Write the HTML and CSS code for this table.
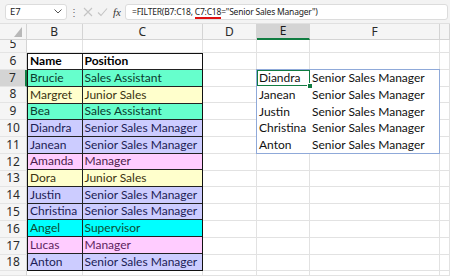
FILE: index.html
```html
<!DOCTYPE html>
<html>
<head>
<meta charset="utf-8">
<link rel="stylesheet" href="styles.css">
</head>
<body>
<div class="app">
  <div class="toolbar">
    <div class="namebox"><span class="nb-text">E7</span>
      <svg class="caret" width="8" height="5" viewBox="0 0 8 5"><path d="M0.5 0.5 L4 4 L7.5 0.5" fill="none" stroke="#555" stroke-width="1"/></svg>
    </div>
    <div class="dots">⋮</div>
    <svg class="ico" width="10" height="10" viewBox="0 0 10 10"><path d="M1 1 L9 9 M9 1 L1 9" stroke="#c4c4c4" stroke-width="1.1" fill="none"/></svg>
    <svg class="ico" width="11" height="10" viewBox="0 0 11 10"><path d="M1 5.5 L4 8.5 L10 1.5" stroke="#c4c4c4" stroke-width="1.1" fill="none"/></svg>
    <div class="fx">fx</div>
    <div class="formula">=FILTER(B7:C18, <span class="err">C7:C18</span>="Senior Sales Manager")</div>
  </div>
  <div class="sheet">
    <div class="layer grid">
      <div class="corner"><svg width="27" height="16" viewBox="0 0 27 16"><path d="M22 3 L22 13 L14 13 Z" fill="#b8b8b8"/></svg></div>
      <div class="ch">B</div><div class="ch">C</div><div class="ch">D</div><div class="ch sel">E</div><div class="ch">F</div><div class="ch last"></div>

      <div class="rh part"><span class="rn">5</span></div><div class="c"></div><div class="c"></div><div class="c"></div><div class="c"></div><div class="c"></div><div class="c"></div>
      <div class="rh">6</div><div class="c"></div><div class="c"></div><div class="c"></div><div class="c"></div><div class="c"></div><div class="c"></div>
      <div class="rh sel">7</div><div class="c"></div><div class="c"></div><div class="c"></div><div class="c"></div><div class="c"></div><div class="c"></div>
      <div class="rh">8</div><div class="c"></div><div class="c"></div><div class="c"></div><div class="c"></div><div class="c"></div><div class="c"></div>
      <div class="rh">9</div><div class="c"></div><div class="c"></div><div class="c"></div><div class="c"></div><div class="c"></div><div class="c"></div>
      <div class="rh">10</div><div class="c"></div><div class="c"></div><div class="c"></div><div class="c"></div><div class="c"></div><div class="c"></div>
      <div class="rh">11</div><div class="c"></div><div class="c"></div><div class="c"></div><div class="c"></div><div class="c"></div><div class="c"></div>
      <div class="rh">12</div><div class="c"></div><div class="c"></div><div class="c"></div><div class="c"></div><div class="c"></div><div class="c"></div>
      <div class="rh">13</div><div class="c"></div><div class="c"></div><div class="c"></div><div class="c"></div><div class="c"></div><div class="c"></div>
      <div class="rh">14</div><div class="c"></div><div class="c"></div><div class="c"></div><div class="c"></div><div class="c"></div><div class="c"></div>
      <div class="rh">15</div><div class="c"></div><div class="c"></div><div class="c"></div><div class="c"></div><div class="c"></div><div class="c"></div>
      <div class="rh">16</div><div class="c"></div><div class="c"></div><div class="c"></div><div class="c"></div><div class="c"></div><div class="c"></div>
      <div class="rh">17</div><div class="c"></div><div class="c"></div><div class="c"></div><div class="c"></div><div class="c"></div><div class="c"></div>
      <div class="rh">18</div><div class="c"></div><div class="c"></div><div class="c"></div><div class="c"></div><div class="c"></div><div class="c"></div>
      <div class="rh"></div><div class="c"></div><div class="c"></div><div class="c"></div><div class="c"></div><div class="c"></div><div class="c"></div>
    </div>
    <div class="layer content">
      <div class="table">
        <div class="t hd">Name</div><div class="t hd">Position</div>
        <div class="t aq">Brucie</div><div class="t aq">Sales Assistant</div>
        <div class="t ye">Margret</div><div class="t ye">Junior Sales</div>
        <div class="t aq">Bea</div><div class="t aq">Sales Assistant</div>
        <div class="t lv">Diandra</div><div class="t lv">Senior Sales Manager</div>
        <div class="t lv">Janean</div><div class="t lv">Senior Sales Manager</div>
        <div class="t pk">Amanda</div><div class="t pk">Manager</div>
        <div class="t ye">Dora</div><div class="t ye">Junior Sales</div>
        <div class="t lv">Justin</div><div class="t lv">Senior Sales Manager</div>
        <div class="t lv">Christina</div><div class="t lv">Senior Sales Manager</div>
        <div class="t cy">Angel</div><div class="t cy">Supervisor</div>
        <div class="t pk2">Lucas</div><div class="t pk2">Manager</div>
        <div class="t lv">Anton</div><div class="t lv">Senior Sales Manager</div>
      </div>
      <div class="spill">
        <div class="s active">Diandra<span class="handle"></span></div><div class="s">Senior Sales Manager</div>
        <div class="s">Janean</div><div class="s">Senior Sales Manager</div>
        <div class="s">Justin</div><div class="s">Senior Sales Manager</div>
        <div class="s">Christina</div><div class="s">Senior Sales Manager</div>
        <div class="s">Anton</div><div class="s">Senior Sales Manager</div>
      </div>
    </div>
  </div>
</div>
</body>
</html>
```

FILE: styles.css
```css
html, body {
  margin: 0;
  padding: 0;
  background: #ffffff;
}
.app {
  width: 450px;
  height: 276px;
  overflow: hidden;
  display: flex;
  flex-direction: column;
  font-family: "Noto Sans", sans-serif;
}
.toolbar {
  height: 24px;
  flex: none;
  background: #f3f3f3;
  display: flex;
  align-items: center;
  box-sizing: border-box;
  padding: 0 2px 0 5px;
  border-bottom: 1px solid #e0e0e0;
}
.namebox {
  width: 62px;
  height: 16px;
  box-sizing: border-box;
  background: #fff;
  border: 1px solid #dcdcdc;
  border-radius: 3px;
  display: flex;
  align-items: center;
  justify-content: space-between;
  padding: 0 4px 0 4px;
}
.nb-text {
  font-size: 9.5px;
  color: #222;
}
.caret { display: block; }
.dots {
  width: 12px;
  margin-left: 1px;
  text-align: center;
  font-size: 10px;
  color: #666;
}
.ico {
  display: block;
  margin-left: 3px;
}
.toolbar .ico + .ico { margin-left: 4px; }
.fx {
  font-family: "Liberation Serif", serif;
  font-style: italic;
  font-size: 11px;
  color: #333;
  margin-left: 5px;
  width: 12px;
}
.formula {
  flex: 1;
  height: 16px;
  box-sizing: border-box;
  margin-left: 0;
  background: #fff;
  border: 1px solid #dcdcdc;
  border-radius: 3px;
  font-size: 8.5px;
  letter-spacing: -0.2px;
  line-height: 14px;
  padding-left: 6px;
  color: #222;
  white-space: nowrap;
  overflow: hidden;
}
.err {
  border-bottom: 2px solid #e01010;
}
.sheet {
  flex: 1;
  display: grid;
}
.layer {
  grid-area: 1 / 1;
  display: grid;
  grid-template-columns: 27px 55.5px 120.5px 54px 53px 130px 1fr;
  grid-template-rows: 16px 13px repeat(13, 16.8px) 1fr;
}
.corner {
  background: #f5f5f5;
  border-right: 1px solid #d4d4d4;
  border-bottom: 1px solid #d4d4d4;
  box-sizing: border-box;
}
.corner svg { display: block; }
.ch {
  background: #f5f5f5;
  border-right: 1px solid #d4d4d4;
  border-bottom: 1px solid #d4d4d4;
  box-sizing: border-box;
  font-size: 12px;
  color: #2a2a2a;
  display: flex;
  align-items: center;
  justify-content: center;
  line-height: 1;
}
.ch.sel {
  background: #d4d4d4;
  border-bottom: 2px solid #107c41;
  color: #1a1a1a;
}
.rh {
  background: #f5f5f5;
  border-right: 1px solid #d4d4d4;
  border-bottom: 1px solid #e4e4e4;
  box-sizing: border-box;
  font-size: 12px;
  color: #2a2a2a;
  display: flex;
  align-items: center;
  justify-content: center;
  line-height: 1;
  overflow: hidden;
}
.rh.part {
  align-items: flex-end;
  padding-bottom: 2px;
}
.rn {
  display: block;
  height: 10px;
  line-height: 8px;
  overflow: hidden;
}
.rh.sel {
  background: #d4d4d4;
  border-right: 2px solid #107c41;
}
.c {
  border-right: 1px solid #e2e2e2;
  border-bottom: 1px solid #e2e2e2;
  box-sizing: border-box;
}
.content { pointer-events: none; }
.table {
  grid-column: 2 / 4;
  grid-row: 3 / 16;
  display: grid;
  grid-template-columns: 54.5px 1fr;
  grid-template-rows: repeat(13, 1fr);
  border: 1.5px solid #111;
  margin: -0.5px 0 0 0;
  box-sizing: border-box;
  font-family: Lato, sans-serif;
  font-size: 12px;
}
.t {
  border-bottom: 1px solid #222;
  display: flex;
  align-items: flex-end;
  padding: 0 0 1px 2px;
  line-height: 14px;
  white-space: nowrap;
  overflow: hidden;
}
.t:nth-child(odd) { border-right: 1px solid #222; }
.t:nth-last-child(-n+2) { border-bottom: none; }
.hd { background: #fff; font-weight: bold; color: #000; }
.aq { background: #66ffcc; color: #0b3b2e; }
.ye { background: #ffffcc; color: #3b3310; }
.lv { background: #ccccff; color: #1c1c55; }
.pk { background: #ffccff; color: #4a1d4a; }
.pk2 { background: #ffccff; color: #5e1f5e; }
.cy { background: #00ffff; color: #0a4d33; }
.spill {
  grid-column: 5 / 7;
  grid-row: 4 / 9;
  display: grid;
  grid-template-columns: 53px 1fr;
  grid-template-rows: repeat(5, 1fr);
  border: 1px solid #8fa9d9;
  margin: -1px 0 0 -1px;
  background: #fff;
  font-family: Lato, sans-serif;
  font-size: 12px;
  color: #111;
}
.s {
  display: flex;
  align-items: flex-end;
  padding: 0 0 1px 2px;
  line-height: 14px;
  white-space: nowrap;
  position: relative;
}
.s.active {
  outline: 1.5px solid #107c41;
  outline-offset: -1px;
}
.handle {
  position: absolute;
  right: -3px;
  bottom: -3px;
  width: 4px;
  height: 4px;
  background: #107c41;
  border: 1px solid #fff;
}
```
